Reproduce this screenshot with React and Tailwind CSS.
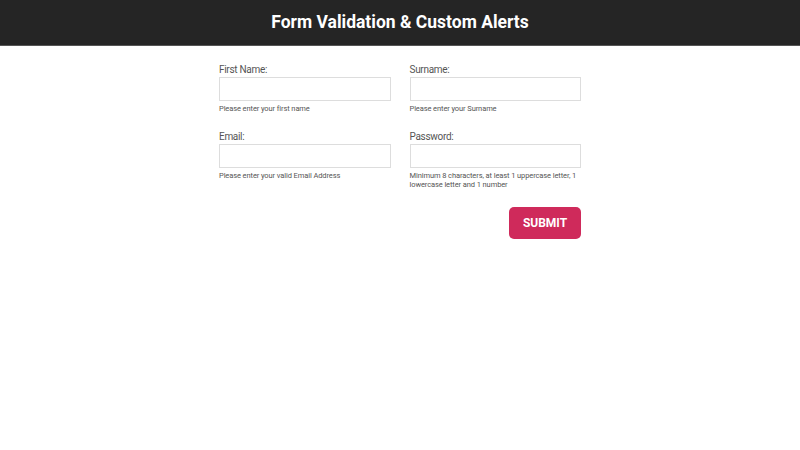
export default function App() {
  const fields = [
    { label: 'First Name:', help: 'Please enter your first name', type: 'text' },
    { label: 'Surname:', help: 'Please enter your Surname', type: 'text' },
    { label: 'Email:', help: 'Please enter your valid Email Address', type: 'email' },
    {
      label: 'Password:',
      help: 'Minimum 8 characters, at least 1 uppercase letter, 1 lowercase letter and 1 number',
      type: 'password',
    },
  ];

  return (
    <div className="min-h-[450px] bg-white font-['Roboto',sans-serif]">
      <header className="h-[46px] bg-[#252525] border-b border-[#555] flex items-center justify-center">
        <h1 className="text-white font-bold text-[17.5px] leading-none">Form Validation &amp; Custom Alerts</h1>
      </header>

      <form className="w-[362px] mx-auto pt-[17px]" onSubmit={(e) => e.preventDefault()}>
        <div className="grid grid-cols-2 gap-x-[19px] gap-y-[17px]">
          {fields.map((f) => (
            <div key={f.label} className="flex flex-col">
              <label className="text-[10px] leading-[13px] tracking-[-0.3px] text-[#555]">{f.label}</label>
              <input
                type={f.type}
                className="mt-[1px] h-[24px] border border-[#ddd] outline-none px-1 text-[11px]"
              />
              <p className="mt-[3px] mr-[-8px] text-[7.5px] leading-[9px] tracking-[-0.1px] text-[#555]">{f.help}</p>
            </div>
          ))}
        </div>
        <div className="flex justify-end mt-[18px]">
          <button
            type="submit"
            className="w-[72px] h-[32px] rounded-[5px] bg-[#cf2a5b] text-white font-bold text-[12px]"
          >
            SUBMIT
          </button>
        </div>
      </form>
    </div>
  );
}
